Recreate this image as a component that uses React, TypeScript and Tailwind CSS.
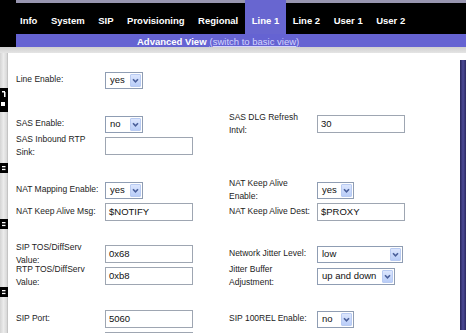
import React from "react";

type Ctrl =
  | { t: "sel"; v: string; w: string }
  | { t: "in"; v: string };

type Row = {
  h: string;
  l?: string;
  c?: Ctrl;
  rl?: string;
  rc?: Ctrl;
};

const rows: Row[] = [
  { h: "h-[22px]", l: "Line Enable:", c: { t: "sel", v: "yes", w: "w-[38px]" } },
  { h: "h-[22px]" },
  {
    h: "h-[22px]",
    l: "SAS Enable:",
    c: { t: "sel", v: "no", w: "w-[38px]" },
    rl: "SAS DLG Refresh Intvl:",
    rc: { t: "in", v: "30" },
  },
  { h: "h-[22px]", l: "SAS Inbound RTP Sink:", c: { t: "in", v: "" } },
  { h: "h-[22px]" },
  {
    h: "h-[22px]",
    l: "NAT Mapping Enable:",
    c: { t: "sel", v: "yes", w: "w-[38px]" },
    rl: "NAT Keep Alive Enable:",
    rc: { t: "sel", v: "yes", w: "w-[37px]" },
  },
  {
    h: "h-[22px]",
    l: "NAT Keep Alive Msg:",
    c: { t: "in", v: "$NOTIFY" },
    rl: "NAT Keep Alive Dest:",
    rc: { t: "in", v: "$PROXY" },
  },
  { h: "h-[20px]" },
  {
    h: "h-[22px]",
    l: "SIP TOS/DiffServ Value:",
    c: { t: "in", v: "0x68" },
    rl: "Network Jitter Level:",
    rc: { t: "sel", v: "low", w: "w-[86px]" },
  },
  {
    h: "h-[22px]",
    l: "RTP TOS/DiffServ Value:",
    c: { t: "in", v: "0xb8" },
    rl: "Jitter Buffer Adjustment:",
    rc: { t: "sel", v: "up and down", w: "w-[78px]" },
  },
  { h: "h-[21px]" },
  {
    h: "h-[22px]",
    l: "SIP Port:",
    c: { t: "in", v: "5060" },
    rl: "SIP 100REL Enable:",
    rc: { t: "sel", v: "no", w: "w-[37px]" },
  },
  { h: "h-[22px]", l: "", c: { t: "in", v: "" } },
];

const nav = ["Info", "System", "SIP", "Provisioning", "Regional", "Line 1", "Line 2", "User 1", "User 2"];

function Select({ v, w }: { v: string; w: string }) {
  return (
    <div
      className={`${w} h-[17px] border border-[#8f9db3] bg-white flex items-center justify-between pl-[4px] pr-[1px]`}
    >
      <span className="text-[9.5px] leading-[12px] text-[#111] whitespace-nowrap">{v}</span>
      <div className="w-[11px] h-[13px] rounded-[1px] border border-[#b9cbf2] bg-[linear-gradient(to_bottom,#dce6fd,#b9cdf8)] flex items-center justify-center">
        <svg width="9" height="9" viewBox="0 0 9 9">
          <path d="M2 3.2 L4.5 5.8 L7 3.2" fill="none" stroke="#4a5f9a" strokeWidth="1.6" />
        </svg>
      </div>
    </div>
  );
}

function Input({ v }: { v: string }) {
  return (
    <div className="w-[88px] h-[18px] border border-[#9ea6b2] bg-white flex items-center pl-[3px]">
      <span className="text-[9.5px] leading-[12px] text-[#111] whitespace-nowrap">{v}</span>
    </div>
  );
}

function Control({ c }: { c?: Ctrl }) {
  if (!c) return null;
  return c.t === "sel" ? <Select v={c.v} w={c.w} /> : <Input v={c.v} />;
}

function Mark({ big }: { big?: boolean }) {
  return big ? (
    <svg width="8" height="24" viewBox="0 0 8 24" className="block">
      <rect width="8" height="24" fill="#000" />
      <rect x="2" y="3" width="3" height="1.5" fill="#fff" />
      <rect x="4" y="4" width="1.5" height="5" fill="#fff" />
      <rect x="1" y="14" width="4" height="4" fill="#fff" />
    </svg>
  ) : (
    <svg width="8" height="10" viewBox="0 0 8 10" className="block">
      <rect width="8" height="10" fill="#000" />
      <rect x="2" y="3" width="3.5" height="1.3" fill="#fff" />
      <rect x="2" y="5.8" width="3.5" height="1.3" fill="#fff" />
    </svg>
  );
}

export default function App() {
  return (
    <div className="w-[474px] h-[333px] overflow-hidden bg-white font-['Liberation_Sans',Arial,sans-serif]">
      {/* header */}
      <div className="flex h-[47px]">
        <div className="w-[16px] bg-black" />
        <div className="w-[450px] flex flex-col">
          <div className="h-[34px] flex bg-[#9896b0]">
            {nav.map((n, i) => {
              const active = n === "Line 1";
              const pad = i === 0 ? "pl-[4px] pr-[6.75px]" : "px-[6.75px]";
              return (
                <div
                  key={n}
                  className={
                    active
                      ? `bg-[#6866d0] ${pad} pt-[15px]`
                      : `mt-[3px] bg-black ${pad} pt-[12px]`
                  }
                >
                  <span className="block text-[9.5px] leading-[12px] font-bold text-white whitespace-nowrap">
                    {n}
                  </span>
                </div>
              );
            })}
            <div className="flex-1 mt-[3px] bg-black" />
          </div>
          <div className="h-[13px] bg-[#6563d2] pl-[121px] pt-[1.5px] flex items-start gap-[3px] text-[9.5px] leading-[11px] overflow-hidden">
            <span className="font-bold text-white whitespace-nowrap">Advanced View</span>
            <span className="text-[#d4d4ff] underline whitespace-nowrap">(switch to basic view)</span>
          </div>
        </div>
        <div className="flex-1 bg-white" />
      </div>
      <div className="w-[466px] h-[6px] bg-[linear-gradient(to_bottom,#cfcfcf,#e4e4e4)]" />

      {/* body */}
      <div className="flex h-[280px]">
        <div className="w-[8px] bg-[linear-gradient(to_right,#d4d4d4,#ececec,#d8d8d8)] border-r border-[#c4c4c4] flex flex-col">
          <div className="mt-[35px]">
            <Mark big />
          </div>
          <div className="mt-[51px]">
            <Mark />
          </div>
          <div className="mt-[46px]">
            <Mark />
          </div>
          <div className="mt-[58px]">
            <Mark />
          </div>
        </div>
        <div className="w-[452px] pl-[8px] pt-[16px] flex flex-col">
          {rows.map((r, i) => (
            <div key={i} className={`${r.h} flex items-center shrink-0`}>
              <div className="w-[89px] text-[8.5px] leading-[13.5px] text-[#1c1c1c]">{r.l}</div>
              <div className="w-[124px]">
                <Control c={r.c} />
              </div>
              <div className="w-[88px] text-[8.5px] leading-[13.5px] text-[#1c1c1c]">{r.rl}</div>
              <div>
                <Control c={r.rc} />
              </div>
            </div>
          ))}
        </div>
        <div className="w-[6px] flex flex-col">
          <div className="mt-[7px] h-[270px] bg-[linear-gradient(to_right,#27255a,#4c4a96,#2a2862)]" />
        </div>
      </div>
    </div>
  );
}
